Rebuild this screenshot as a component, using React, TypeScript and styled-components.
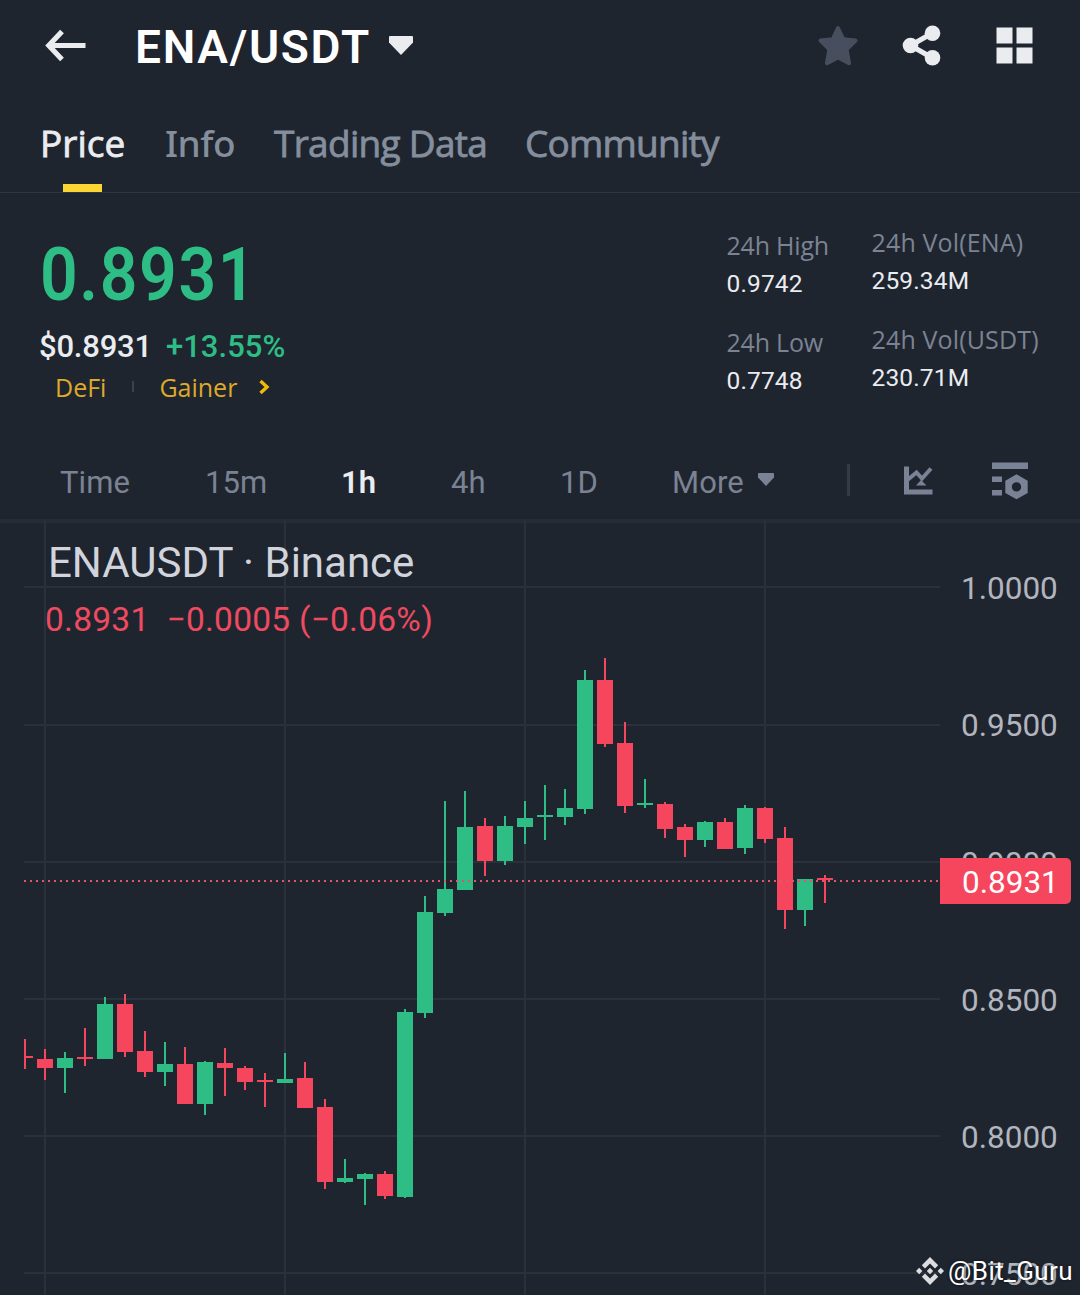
import React from "react";
import styled, { createGlobalStyle } from "styled-components";

const color = {
  bg: "#1f252f",
  text: "#eaecef",
  muted: "#848e9c",
  dim: "#7b8393",
  line: "#2f3742",
  grid: "#2b313b",
  up: "#2ebd85",
  down: "#f6465d",
  gold: "#dfa92a",
  brand: "#fcd535",
};

const roboto = `Roboto, "Liberation Sans", sans-serif`;
const humanist = `"Open Sans", "Noto Sans", sans-serif`;

const GlobalStyle = createGlobalStyle`
  *, *::before, *::after { box-sizing: border-box; }
  html, body { margin: 0; background: ${color.bg}; }
  body { overflow: hidden; }
`;

const Screen = styled.main`
  position: relative;
  display: flex;
  flex-direction: column;
  width: 1080px;
  height: 1295px;
  overflow: hidden;
  background: ${color.bg};
  color: ${color.text};
  font-family: ${roboto};
  white-space: nowrap;
`;

const Header = styled.header`
  display: flex;
  align-items: center;
  height: 91px;
  padding: 0 47px 0 44px;
`;

const Pair = styled.h1`
  margin: 0 0 0 47px;
  padding-top: 4px;
  width: 254px;
  color: #fff;
  font-size: 46px;
  font-weight: 600;
  line-height: 91px;
  letter-spacing: 1.7px;
`;

const HeaderActions = styled.div`
  display: flex;
  align-items: center;
  margin-left: auto;
`;

const ShareSlot = styled.span`
  display: flex;
  margin: 0 54px 0 44px;
`;

const Tabs = styled.nav`
  display: flex;
  height: 102px;
  padding-left: 40px;
  border-bottom: 1px solid ${color.line};
`;

const Tab = styled.div<{ $active?: boolean; $width: number; $serifI?: boolean; $track?: number }>`
  display: flex;
  flex-direction: column;
  justify-content: space-between;
  width: ${(p) => p.$width}px;
  color: ${(p) => (p.$active ? color.text : color.muted)};
  font-family: ${(p) => (p.$serifI ? `"Noto Sans", sans-serif` : humanist)};
  font-size: 37px;
  font-weight: 500;
  line-height: 104px;
  letter-spacing: ${(p) => p.$track ?? 0}px;
  -webkit-text-stroke: ${(p) => (p.$serifI ? 0 : 0.8)}px currentColor;
`;

const TabLabel = styled.span`
  height: 92px;
`;

const TabMarker = styled.i`
  width: 39px;
  height: 8px;
  margin-left: 23px;
  background: ${color.brand};
`;

const Ticker = styled.section`
  display: flex;
  justify-content: space-between;
  height: 252px;
  padding: 36px 0 0 40px;
`;

const Quote = styled.div`
  display: flex;
  flex-direction: column;
`;

const LastPrice = styled.strong`
  height: 96px;
  color: ${color.up};
  font-size: 74px;
  font-weight: 600;
  line-height: 92px;
  letter-spacing: 1.8px;
  transform: scaleX(0.893);
  transform-origin: 0 50%;
`;

const PriceLine = styled.div`
  display: flex;
  gap: 14px;
  height: 43px;
  margin-left: -1px;
  font-size: 31px;
  font-weight: 500;
  line-height: 43px;
  letter-spacing: -0.2px;
`;

const Change = styled.span`
  color: ${color.up};
  letter-spacing: 0.05px;
`;

const Tags = styled.div`
  display: flex;
  align-items: center;
  height: 38px;
  padding-left: 15px;
  color: ${color.gold};
  font-family: ${humanist};
  font-size: 25px;
`;

const TagDivider = styled.i`
  width: 2px;
  height: 11px;
  margin: 0 25px 2px 26px;
  background: #3a424e;
`;

const TagLast = styled.span`
  margin-right: 22px;
`;

const Stats = styled.dl`
  display: flex;
  margin: 0;
`;

const StatColumn = styled.div<{ $width: number; $offset?: number }>`
  display: flex;
  flex-direction: column;
  gap: 21px;
  width: ${(p) => p.$width}px;
  margin-top: ${(p) => p.$offset ?? 0}px;
`;

const Stat = styled.div`
  height: 76px;
`;

const StatLabel = styled.dt<{ $track?: number }>`
  color: ${color.dim};
  font-family: ${humanist};
  font-size: 25px;
  line-height: 38px;
  letter-spacing: ${(p) => p.$track ?? 0}px;
`;

const StatValue = styled.dd`
  margin: 0;
  padding-top: 1px;
  font-size: 24.5px;
  line-height: 38px;
  letter-spacing: 0.15px;
`;

const Periods = styled.nav`
  display: flex;
  align-items: center;
  height: 74px;
  padding: 0 0 3px 60px;
`;

const Period = styled.span<{ $width: number; $active?: boolean }>`
  width: ${(p) => p.$width}px;
  padding-top: 5px;
  color: ${(p) => (p.$active ? color.text : color.dim)};
  font-size: 31px;
  font-weight: ${(p) => (p.$active ? 600 : 400)};
  line-height: 74px;
  letter-spacing: 0.1px;
`;

const PeriodDivider = styled.i`
  width: 3px;
  height: 32px;
  margin: 0 54px 1px 73px;
  background: #343b47;
`;

const CaretSlot = styled.span<{ $lift: number }>`
  display: flex;
  padding-bottom: ${(p) => p.$lift}px;
`;

const SettingsSlot = styled.span`
  display: flex;
  margin-left: 59px;
`;

const ChartArea = styled.section`
  position: relative;
  height: 776px;
`;

const ChartSvg = styled.svg`
  display: block;
`;

const AxisText = styled.text`
  fill: #b2b5be;
  font-family: ${roboto};
  font-size: 31.5px;
`;

const Legend = styled.div`
  position: absolute;
  top: 18px;
  left: 45px;
`;

const LegendTitle = styled.div`
  padding-left: 3px;
  color: #d1d4dc;
  font-size: 42px;
  line-height: 52px;
`;

const LegendValues = styled.div`
  display: flex;
  gap: 17px;
  margin-top: 3px;
  color: #ee4a60;
  font-size: 33.5px;
  line-height: 56px;
  letter-spacing: 0.25px;
`;

const PriceBadge = styled.div`
  position: absolute;
  top: 339px;
  left: 940px;
  width: 131px;
  height: 46px;
  padding-left: 22px;
  border-radius: 0 5px 5px 0;
  background: ${color.down};
  color: #fff;
  font-size: 31.5px;
  line-height: 50px;
`;

const Watermark = styled.div`
  position: absolute;
  right: 7px;
  bottom: 8px;
  display: flex;
  align-items: center;
  gap: 4px;
  color: #fff;
  font-size: 26px;
  line-height: 32px;
  letter-spacing: 0.4px;
  text-shadow: 0 0 3px rgba(0, 0, 0, 0.75);
`;

const BackIcon = () => (
  <svg width="44" height="34" viewBox="0 0 44 34" fill="none" stroke="#eaecef" strokeWidth="5.2">
    <path d="M41.500 16.500H5M18 2.500L4.800 16.500l13.200 14" />
  </svg>
);

const Caret = ({ w, h, fill }: { w: number; h: number; fill: string }) => (
  <svg width={w} height={h} viewBox="0 0 24 19" preserveAspectRatio="none">
    <path d="M1 0h22Q24 0 24 1v5.500L12 19 0 6.500V1Q0 0 1 0z" fill={fill} />
  </svg>
);

const StarIcon = () => (
  <svg width="40" height="42" viewBox="0 0 40 42">
    <path
      d="M20 3l5.2 11.2L37.5 15.600 28.600 24.200 31 38.200 20 32.500 9 38.200 11.400 24.200 2.500 15.600 14.800 14.200z"
      fill="#474f5e" stroke="#474f5e" strokeWidth="4" strokeLinejoin="round"
    />
  </svg>
);

const ShareIcon = () => (
  <svg width="40" height="42" viewBox="0 0 40 42" fill="#eaecef">
    <path d="M30.500 8L8.500 20.500l22 12.500" fill="none" stroke="#eaecef" strokeWidth="5" />
    <circle cx="30.500" cy="8.200" r="7.800" />
    <circle cx="8.500" cy="20.500" r="7.800" />
    <circle cx="30.500" cy="32.700" r="7.800" />
  </svg>
);

const GridIcon = () => (
  <svg width="37" height="37" viewBox="0 0 37 37" fill="#eaecef">
    <path d="M.5.500h16v16h-16zM20.500.500h16v16h-16zM.5 20.500h16v16h-16zM20.500 20.500h16v16h-16z" />
  </svg>
);

const Chevron = () => (
  <svg width="11" height="16" viewBox="0 0 11 16" fill="none" stroke="#f0b90b" strokeWidth="3.400">
    <path d="M1.500 2L8 8l-6.500 6" />
  </svg>
);

const IndicatorIcon = () => (
  <svg width="29" height="30" viewBox="0 0 29 30" fill="#7a8296">
    <path d="M0 .5h5v23h23.500v5H0z" />
    <path d="M4 13.500L12.500 6.500l5.500 6L27 2.500" fill="none" stroke="#7a8296" strokeWidth="4" />
    <path d="M17 14l5.500 5.500h-10.500z" />
  </svg>
);

const SettingsIcon = () => (
  <svg width="36" height="38" viewBox="0 0 36 38" fill="#7a8296">
    <path d="M0 .5h36V7H0zM0 14.500h10V20H0zM0 28h10v5.500H0z" />
    <path fillRule="evenodd" d="M24.500 12.300l11.200 6.400v12.200l-11.200 6.400-11.200-6.400V18.700zM24.500 20.200a4.700 4.700 0 100 9.400 4.700 4.700 0 000-9.400z" />
  </svg>
);

const BinanceMark = () => (
  <svg width="28" height="28" viewBox="0 0 28 28" fill="#dcdde0">
    <path d="M14 0l8.200 8.200-3.200 3.200-5-5-5 5-3.200-3.200zM14 28l8.200-8.200-3.200-3.200-5 5-5-5-3.200 3.200zM14 10.800l3.200 3.200-3.200 3.200-3.200-3.200zM3.200 10.800L6.400 14l-3.200 3.200L0 14zM24.800 10.800L28 14l-3.200 3.200-3.200-3.200z" />
  </svg>
);

// [direction, wick top, body top, body bottom, wick bottom], one entry per hour
type Candle = ["u" | "d", number, number, number, number];

const candles: Candle[] = [
  ["d", 1039, 1056, 1058, 1069],
  ["d", 1049, 1059, 1068, 1080],
  ["u", 1052, 1058, 1068, 1093],
  ["d", 1028, 1057, 1059, 1066],
  ["u", 997, 1004, 1059, 1059],
  ["d", 994, 1004, 1052, 1057],
  ["d", 1031, 1051, 1072, 1077],
  ["u", 1042, 1064, 1072, 1086],
  ["d", 1047, 1064, 1104, 1104],
  ["u", 1061, 1062, 1104, 1115],
  ["d", 1048, 1063, 1068, 1096],
  ["d", 1066, 1068, 1082, 1090],
  ["d", 1073, 1080, 1082, 1107],
  ["u", 1053, 1079, 1083, 1083],
  ["d", 1062, 1078, 1108, 1108],
  ["d", 1099, 1107, 1182, 1189],
  ["u", 1159, 1178, 1182, 1183],
  ["u", 1173, 1174, 1179, 1205],
  ["d", 1171, 1174, 1196, 1199],
  ["u", 1009, 1012, 1197, 1198],
  ["u", 896, 912, 1013, 1018],
  ["u", 801, 889, 913, 916],
  ["u", 791, 827, 890, 890],
  ["d", 818, 826, 861, 876],
  ["u", 816, 826, 861, 865],
  ["u", 801, 818, 827, 844],
  ["u", 785, 815, 817, 840],
  ["u", 789, 808, 817, 825],
  ["u", 670, 680, 809, 814],
  ["d", 658, 680, 744, 747],
  ["d", 722, 743, 806, 813],
  ["u", 779, 803, 805, 808],
  ["d", 802, 804, 829, 838],
  ["d", 824, 827, 840, 857],
  ["u", 821, 822, 840, 847],
  ["d", 818, 822, 849, 849],
  ["u", 805, 808, 848, 854],
  ["d", 807, 808, 839, 843],
  ["d", 827, 838, 910, 929],
  ["u", 879, 879, 910, 926],
  ["d", 875, 878, 880, 903],
];

const gridRows: [string, number][] = [
  ["1.0000", 587],
  ["0.9500", 725],
  ["0.9000", 862],
  ["0.8500", 999],
  ["0.8000", 1136],
  ["0.7500", 1273],
];

const gridColumns = [45, 285, 525, 765];

const PriceChart = () => (
  <ChartSvg width="1080" height="776" viewBox="0 519 1080 776">
    <defs>
      <clipPath id="plot">
        <rect x="24" y="519" width="916" height="776" />
      </clipPath>
    </defs>
    <rect x="0" y="519" width="1080" height="4" fill="#252c36" />
    {gridColumns.map((x) => (
      <rect key={x} x={x - 1} y="520" width="2" height="775" fill={color.grid} />
    ))}
    {gridRows.map(([label, y]) => (
      <g key={label}>
        <rect x="24" y={y - 1} width="916" height="2" fill={color.grid} />
        <AxisText x="961" y={y === 725 ? y + 11 : y + 12}>{label}</AxisText>
      </g>
    ))}
    <g clipPath="url(#plot)">
      {candles.map(([dir, high, top, bottom, low], i) => {
        const cx = 25 + i * 20;
        return (
          <g key={i} fill={dir === "u" ? color.up : color.down}>
            <rect x={cx - 1} y={high} width="2" height={low - high} />
            <rect x={cx - 8} y={top} width="16" height={bottom - top} />
          </g>
        );
      })}
    </g>
    <path d="M24 881H940" stroke="#e0566b" strokeWidth="2" strokeDasharray="2 4" />
  </ChartSvg>
);

export default function App() {
  return (
    <Screen>
      <GlobalStyle />
      <Header>
        <BackIcon />
        <Pair>ENA/USDT</Pair>
        <Caret w={24} h={19} fill="#eaecef" />
        <HeaderActions>
          <StarIcon />
          <ShareSlot><ShareIcon /></ShareSlot>
          <GridIcon />
        </HeaderActions>
      </Header>
      <Tabs>
        <Tab $active $width={125}>
          <TabLabel>Price</TabLabel>
          <TabMarker />
        </Tab>
        <Tab $width={109} $serifI $track={-0.5}><TabLabel>Info</TabLabel></Tab>
        <Tab $width={251} $track={-0.7}><TabLabel>Trading Data</TabLabel></Tab>
        <Tab $width={220} $track={-0.75}><TabLabel>Community</TabLabel></Tab>
      </Tabs>
      <Ticker>
        <Quote>
          <LastPrice>0.8931</LastPrice>
          <PriceLine>
            <span>$0.8931</span>
            <Change>+13.55%</Change>
          </PriceLine>
          <Tags>
            <span>DeFi</span>
            <TagDivider />
            <TagLast>Gainer</TagLast>
            <Chevron />
          </Tags>
        </Quote>
        <Stats>
          <StatColumn $width={145} $offset={-3}>
            <Stat>
              <StatLabel $track={-0.2}>24h High</StatLabel>
              <StatValue>0.9742</StatValue>
            </Stat>
            <Stat>
              <StatLabel $track={-0.2}>24h Low</StatLabel>
              <StatValue>0.7748</StatValue>
            </Stat>
          </StatColumn>
          <StatColumn $width={208.5} $offset={-6}>
            <Stat>
              <StatLabel $track={0.15}>24h Vol(ENA)</StatLabel>
              <StatValue>259.34M</StatValue>
            </Stat>
            <Stat>
              <StatLabel $track={0.15}>24h Vol(USDT)</StatLabel>
              <StatValue>230.71M</StatValue>
            </Stat>
          </StatColumn>
        </Stats>
      </Ticker>
      <Periods>
        <Period $width={145}>Time</Period>
        <Period $width={136}>15m</Period>
        <Period $width={110} $active>1h</Period>
        <Period $width={109}>4h</Period>
        <Period $width={112}>1D</Period>
        <Period $width={86}>More</Period>
        <CaretSlot $lift={2}><Caret w={16} h={13} fill="#7a8296" /></CaretSlot>
        <PeriodDivider />
        <IndicatorIcon />
        <SettingsSlot><SettingsIcon /></SettingsSlot>
      </Periods>
      <ChartArea>
        <PriceChart />
        <Legend>
          <LegendTitle>ENAUSDT · Binance</LegendTitle>
          <LegendValues>
            <span>0.8931</span>
            <span>−0.0005 (−0.06%)</span>
          </LegendValues>
        </Legend>
        <PriceBadge>0.8931</PriceBadge>
      </ChartArea>
      <Watermark>
        <BinanceMark />
        @Bit_Guru
      </Watermark>
    </Screen>
  );
}
